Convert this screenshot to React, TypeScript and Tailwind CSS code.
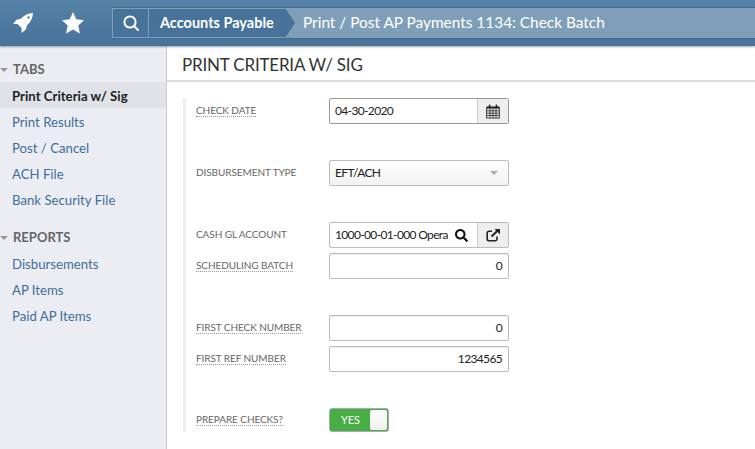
import { FaSearch } from "react-icons/fa";

const tabs = ["Print Results", "Post / Cancel", "ACH File", "Bank Security File"];
const reports = ["Disbursements", "AP Items", "Paid AP Items"];

function SideHeading({ label }: { label: string }) {
  return (
    <div className="flex h-[26px] items-center pt-[2px] text-[13px] font-bold text-[#666]">
      <span className="mr-[5px] h-0 w-0 border-x-[4px] border-t-[4px] border-x-transparent border-t-[#999]" />
      {label}
    </div>
  );
}

function SideLink({ label }: { label: string }) {
  return <div className="flex h-[26px] items-center pl-3 pt-[4px] text-[13.2px] text-[#3f6f99]">{label}</div>;
}

function FieldLabel({ label, dotted = true }: { label: string; dotted?: boolean }) {
  return (
    <div className="w-[143px] pb-[2px] pl-[10px]">
      <span className={`text-[10px] uppercase tracking-[-0.08px] text-[#666] ${dotted ? "border-b border-dotted border-[#999]" : ""}`}>{label}</span>
    </div>
  );
}

function NumberField({ label, value }: { label: string; value: string }) {
  return (
    <div className="flex h-[26px] items-center">
      <FieldLabel label={label} />
      <div className="flex h-[26px] w-[180px] items-center justify-end rounded-[2px] border border-[#bbb] bg-white pr-[6px] text-[#222] shadow-[inset_0_1px_1px_rgba(0,0,0,0.08)]">
        {value}
      </div>
    </div>
  );
}

export default function App() {
  return (
    <div className="flex h-[449px] w-[755px] flex-col overflow-hidden bg-white font-['Lato','Liberation_Sans',sans-serif]">
      <header className="relative z-10 flex h-[46px] items-center bg-gradient-to-b from-[#5582a6] to-[#47729a] shadow-[0_1px_2px_rgba(0,0,0,0.35)]">
        <div className="flex w-[112px] items-center pl-[13px] text-white">
          <svg width="20" height="20" viewBox="0 0 20 20" fill="currentColor">
            <path
              fillRule="evenodd"
              d="M20 0C15 .3 10.5 2.5 7.5 6L3.5 6.8 0 11H4.5L8.5 15 8.7 20 13 16.2 13.8 12.5C17.5 9.5 19.7 5 20 0ZM15.5 3.3a1.2 1.2 0 1 1 0 2.4 1.2 1.2 0 0 1 0-2.4Z"
            />
          </svg>
          <svg width="22" height="22" viewBox="0 0 22 22" fill="currentColor" className="ml-[29px]">
            <path d="M11 0 14.3 7.3 22 8.2 16.3 13.4 17.9 21.5 11 17.6 4.1 21.5 5.7 13.4 0 8.2 7.7 7.3Z" />
          </svg>
        </div>
        <div className="flex h-[32px] flex-1 items-stretch border-y border-[#3f6a8e] bg-[#7f9fb8]">
          <div className="flex w-[37px] items-center justify-center rounded-l-[2px] border border-[#7f9fb8] bg-[#47729a] text-white">
            <svg width="18" height="18" viewBox="0 0 18 18" fill="none" stroke="currentColor" strokeWidth="2">
              <circle cx="8" cy="8" r="5.6" />
              <path d="M12.2 12.2 16 16" strokeLinecap="round" />
            </svg>
          </div>
          <div className="flex w-[136px] items-center border-y border-[#7f9fb8] bg-[#47729a] pl-[11px] text-[14.5px] font-bold text-white">Accounts Payable</div>
          <svg width="10" height="30" viewBox="0 0 10 30" className="shrink-0">
            <path d="M0 0 10 15 0 30Z" fill="#47729a" />
          </svg>
          <div className="flex items-center pl-[8px] text-[15.4px] text-white">Print / Post AP Payments 1134: Check Batch</div>
        </div>
      </header>

      <div className="flex min-h-0 flex-1">
        <aside className="w-[167px] shrink-0 border-r border-[#ccc] bg-[#ebedf3] pt-[10px]">
          <SideHeading label="TABS" />
          <div className="flex h-[26px] items-center bg-[#e0e2e8] pl-3 pt-[3px] text-[13.2px] font-bold text-[#222]">Print Criteria w/ Sig</div>
          {tabs.map((tab) => (
            <SideLink key={tab} label={tab} />
          ))}
          <div className="h-[12px]" />
          <SideHeading label="REPORTS" />
          {reports.map((item) => (
            <SideLink key={item} label={item} />
          ))}
        </aside>

        <main className="min-w-0 flex-1">
          <h1 className="flex h-[36px] items-center border-b-2 border-[#ddd] pl-[15px] pt-[3px] text-[17px] tracking-[-0.2px] text-[#333]">PRINT CRITERIA W/ SIG</h1>
          <div className="ml-[16px] mt-[16px] border-l-[3px] border-[#eee] text-[12px] tracking-[-0.65px]">
            <div className="flex h-[26px] items-center">
              <FieldLabel label="Check Date" />
              <div className="flex h-[26px] w-[180px] rounded-[2px] border border-[#999] bg-white text-[#222]">
                <div className="flex flex-1 items-center pl-[5px]">04-30-2020</div>
                <div className="flex w-[31px] items-center justify-center border-l border-[#ccc] bg-[#eee]">
                  <svg width="14" height="15" viewBox="0 0 14 15" fill="#222">
                    <path d="M1 2.4h12a.8.8 0 0 1 .8.8v10.6a.8.8 0 0 1-.8.8H1a.8.8 0 0 1-.8-.8V3.2a.8.8 0 0 1 .8-.8Z" />
                    <path d="M1.1 4.6h11.8v9H1.1Z" fill="#eee" />
                    <path d="M1.1 6.8h11.8M1.1 9.2h11.8M1.1 11.5h11.8M4 4.6v9M7 4.6v9M10 4.6v9" stroke="#222" strokeWidth="0.8" fill="none" />
                    <rect x="2.8" y="0.4" width="1.6" height="3.2" rx="0.6" />
                    <rect x="9.6" y="0.4" width="1.6" height="3.2" rx="0.6" />
                  </svg>
                </div>
              </div>
            </div>

            <div className="mt-[36px] flex h-[26px] items-center">
              <FieldLabel label="Disbursement Type" dotted={false} />
              <div className="flex h-[26px] w-[180px] items-center justify-between rounded-[2px] border border-[#bbb] bg-gradient-to-b from-white to-[#f2f2f2] pl-[5px] pr-[10px] text-[#222]">
                EFT/ACH
                <span className="h-0 w-0 border-x-[4px] border-t-[4px] border-x-transparent border-t-[#aaa]" />
              </div>
            </div>

            <div className="mt-[36px] flex h-[26px] items-center">
              <FieldLabel label="Cash GL Account" dotted={false} />
              <div className="flex h-[26px] w-[180px] rounded-[2px] border border-[#bbb] bg-white text-[#222]">
                <div className="flex min-w-0 flex-1 items-center justify-between pl-[5px] pr-[9px]">
                  <span className="w-[113px] overflow-hidden whitespace-nowrap">1000-00-01-000 Operating</span>
                  <FaSearch size={13} className="shrink-0 text-[#111]" />
                </div>
                <div className="flex w-[31px] items-center justify-center border-l border-[#ccc] bg-[#eee]">
                  <svg width="15" height="14" viewBox="0 0 15 14" fill="none" stroke="#222" strokeWidth="1.6">
                    <path d="M11 8.5V11a1.8 1.8 0 0 1-1.8 1.8H3A1.8 1.8 0 0 1 1.2 11V5A1.8 1.8 0 0 1 3 3.2h3" />
                    <path d="M5.5 8.5 12.5 1.8" strokeWidth="2" />
                    <path d="M8.5 1h5.5v5.5Z" fill="#222" stroke="none" />
                  </svg>
                </div>
              </div>
            </div>

            <div className="mt-[5px]">
              <NumberField label="Scheduling Batch" value="0" />
            </div>
            <div className="mt-[36px]">
              <NumberField label="First Check Number" value="0" />
            </div>
            <div className="mt-[5px]">
              <NumberField label="First Ref Number" value="1234565" />
            </div>

            <div className="mt-[36px] flex h-[24px] items-center">
              <FieldLabel label="Prepare Checks?" />
              <div className="flex h-[24px] w-[60px] overflow-hidden rounded-[3px] border border-[#aaa] bg-[#46ae45] p-px">
                <div className="flex w-[39px] items-center justify-center text-[11px] tracking-normal text-white">YES</div>
                <div className="flex-1 rounded-[2px] bg-gradient-to-b from-white to-[#eee]" />
              </div>
            </div>
          </div>
        </main>
      </div>
    </div>
  );
}
